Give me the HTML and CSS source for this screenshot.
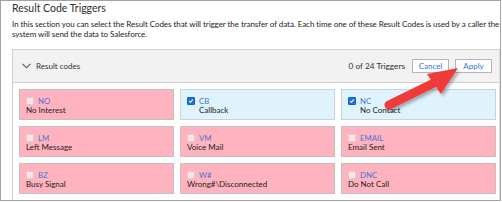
FILE: index.html
```html
<!DOCTYPE html>
<html lang="en">
<head>
<meta charset="utf-8">
<title>Result Code Triggers</title>
<link rel="stylesheet" href="styles.css">
</head>
<body>
<div class="frame">
  <h1 class="title">Result Code Triggers</h1>
  <p class="desc">In this section you can select the Result Codes that will trigger the transfer of data. Each time one of these Result Codes is used by a caller the system will send the data to Salesforce.</p>
  <section class="panel">
    <header class="panel-head">
      <div class="head-left">
        <svg class="chev" width="9" height="6" viewBox="0 0 9 6"><path d="M0.5 0.8 L4.5 4.8 L8.5 0.8" fill="none" stroke="#555" stroke-width="1.1"/></svg>
        <span class="head-title">Result codes</span>
      </div>
      <div class="head-right">
        <span class="count">0 of 24 Triggers</span>
        <button class="btn">Cancel</button>
        <button class="btn">Apply</button>
      </div>
    </header>
    <div class="grid">
      <div class="card pink"><div class="code-row"><span class="box"></span><span class="code">NO</span></div><div class="label">No Interest</div></div>
      <div class="card blue checked"><div class="code-row"><span class="box on"><svg width="8" height="8" viewBox="0 0 8 8"><path d="M1.6 4.1 L3.3 5.8 L6.4 2.2" fill="none" stroke="#fff" stroke-width="1.4"/></svg></span><span class="code">CB</span></div><div class="label">Callback</div></div>
      <div class="card blue checked"><div class="code-row"><span class="box on"><svg width="8" height="8" viewBox="0 0 8 8"><path d="M1.6 4.1 L3.3 5.8 L6.4 2.2" fill="none" stroke="#fff" stroke-width="1.4"/></svg></span><span class="code">NC</span></div><div class="label">No Contact</div></div>
      <div class="card pink"><div class="code-row"><span class="box"></span><span class="code">LM</span></div><div class="label">Left Message</div></div>
      <div class="card pink"><div class="code-row"><span class="box"></span><span class="code">VM</span></div><div class="label">Voice Mail</div></div>
      <div class="card pink"><div class="code-row"><span class="box"></span><span class="code">EMAIL</span></div><div class="label">Email Sent</div></div>
      <div class="card pink"><div class="code-row"><span class="box"></span><span class="code">BZ</span></div><div class="label">Busy Signal</div></div>
      <div class="card pink"><div class="code-row"><span class="box"></span><span class="code">W#</span></div><div class="label">Wrong#\Disconnected</div></div>
      <div class="card pink"><div class="code-row"><span class="box"></span><span class="code">DNC</span></div><div class="label">Do Not Call</div></div>
      <div class="card pink"></div>
      <div class="card pink"></div>
      <div class="card pink"></div>
    </div>
  </section>
  <svg class="arrow" width="502" height="202" viewBox="0 0 502 202">
    <defs>
      <filter id="sh" x="-20%" y="-20%" width="140%" height="140%">
        <feDropShadow dx="2" dy="2.5" stdDeviation="1.8" flood-color="#000" flood-opacity="0.3"/>
      </filter>
    </defs>
    <g filter="url(#sh)" fill="#f03b3b">
      <line x1="389" y1="105" x2="436" y2="82" stroke="#f03b3b" stroke-width="9" stroke-linecap="round"/>
      <polygon points="458,68 427,74 441,94"/>
    </g>
  </svg>
</div>
</body>
</html>
```

FILE: styles.css
```css
* { box-sizing: border-box; }
html, body { margin: 0; padding: 0; background: #fff; }
body { font-family: Lato, "Liberation Sans", sans-serif; color: #2b2b2b; }

.frame {
  position: relative;
  width: 501px;
  height: 201px;
  border: 1px solid #a3a3a3;
  overflow: hidden;
  padding-left: 11px;
}

.title {
  margin: 0;
  font-size: 10.5px;
  line-height: 14px;
  font-weight: 400;
  color: #2e2e2e;
}

.desc {
  margin: 4px 0 0;
  font-size: 8px;
  line-height: 10px;
  letter-spacing: -0.05px;
  color: #222;
}

.panel {
  margin-top: 10px;
  width: 488px;
  border: 1px solid #cfcfcf;
  border-right-color: #dcdcdc;
  background: #fff;
  height: 200px;
}

.panel-head {
  height: 33px;
  background: #f2f2f2;
  border-bottom: 1px solid #cfcfcf;
  display: flex;
  align-items: center;
  justify-content: space-between;
  padding: 0 7px 0 9px;
}

.head-left { display: flex; align-items: center; gap: 5px; }
.chev { display: block; }
.head-title { font-size: 8px; color: #333; }

.head-right { display: flex; align-items: center; gap: 6px; }
.count { font-size: 8.3px; color: #333; margin-right: 1px; }
.btn {
  width: 37px;
  height: 14px;
  padding: 0;
  border: 1px solid #b5b5b5;
  background: #fff;
  color: #3a72d6;
  font-family: Lato, "Liberation Sans", sans-serif;
  font-size: 8px;
  line-height: 12px;
}

.grid {
  display: grid;
  grid-template-columns: repeat(3, 1fr);
  column-gap: 6px;
  row-gap: 6px;
  padding: 6px 3px 0 6px;
}

.card {
  height: 31px;
  border: 1px solid #c6bfc0;
  padding: 6px 6px 0 6px;
}
.card.pink { background: #ffb3bf; }
.card.blue { background: #dff3fd; border-color: #c6d3da; }

.code-row { display: flex; align-items: center; gap: 4px; height: 10px; }
.box {
  width: 8px;
  height: 8px;
  background: #f7e4e7;
  border: 1px solid #e6c9ce;
  border-radius: 1px;
  display: flex;
  align-items: center;
  justify-content: center;
}
.box.on { background: #1f6fe0; border-color: #1a5fc4; }
.box svg { display: block; }
.code { font-size: 7.8px; color: #3f74d8; line-height: 10px; }
.label { font-size: 8px; line-height: 9px; color: #222; }
.checked .label { padding-left: 12px; }

.arrow {
  position: absolute;
  left: -1px;
  top: -1px;
  pointer-events: none;
}
```
